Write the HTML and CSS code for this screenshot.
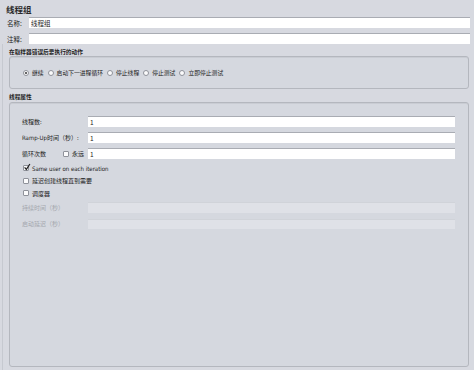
FILE: index.html
```html
<!DOCTYPE html>
<html>
<head>
  <title>线程组</title>
  <link rel="stylesheet" href="styles.css">
</head>
<body>

  <div class="title">线程组</div>

  <div class="field-row">
    <label class="field-label">名称:</label>
    <input class="text-input" type="text" value="线程组">
  </div>
  <div class="field-row comment-row">
    <label class="field-label">注释:</label>
    <input class="text-input" type="text" value="">
  </div>

  <div class="panel">
    <div class="group-title">在取样器错误后要执行的动作</div>
    <div class="group action-group">
      <label class="opt"><span class="radio checked"></span>继续</label>
      <label class="opt"><span class="radio"></span>启动下一进程循环</label>
      <label class="opt"><span class="radio"></span>停止线程</label>
      <label class="opt"><span class="radio"></span>停止测试</label>
      <label class="opt"><span class="radio"></span>立即停止测试</label>
    </div>

    <div class="group-title second-title">线程属性</div>
    <div class="group props">
      <div class="prop-row">
        <span class="prop-label">线程数:</span>
        <input class="prop-input" type="text" value="1">
      </div>
      <div class="prop-row">
        <span class="prop-label"><span class="latin">Ramp-Up</span>时间（秒）:</span>
        <input class="prop-input" type="text" value="1">
      </div>
      <div class="prop-row">
        <span class="prop-label loop-label">循环次数
          <span class="forever"><span class="check"></span>永远</span>
        </span>
        <input class="prop-input" type="text" value="1">
      </div>

      <div class="checks">
        <label class="check-row">
          <span class="check checked">
            <svg viewBox="0 0 10 10" width="8" height="8"><path d="M2 5.4 L4.2 8 L8.6 1.2" fill="none" stroke="#222" stroke-width="1.5"/></svg>
          </span>
          <span class="latin">Same user on each iteration</span>
        </label>
        <label class="check-row"><span class="check"></span>延迟创建线程直到需要</label>
        <label class="check-row"><span class="check"></span>调度器</label>
      </div>

      <div class="prop-row disabled first-disabled">
        <span class="prop-label">持续时间（秒）</span>
        <input class="prop-input" type="text" disabled>
      </div>
      <div class="prop-row disabled">
        <span class="prop-label">启动延迟（秒）</span>
        <input class="prop-input" type="text" disabled>
      </div>
    </div>
  </div>

</body>
</html>
```

FILE: styles.css
```css
body {
  margin: 0;
  width: 474px;
  height: 370px;
  overflow: hidden;
  background: #d7d9e0;
  font-family: "Noto Sans CJK SC", sans-serif;
  font-size: 6px;
  color: #222;
}
.latin {
  font-family: "DejaVu Sans Condensed", "DejaVu Sans", sans-serif;
  font-size: 6px;
}
.title {
  height: 17px;
  box-sizing: border-box;
  padding: 3px 0 0 6px;
  font-size: 8.5px;
  line-height: 12px;
  font-weight: bold;
  color: #2a2a2a;
}
.field-row {
  display: flex;
  align-items: center;
  height: 11px;
  padding-left: 7px;
  font-size: 6.5px;
}
.comment-row {
  margin-top: 5px;
}
.field-label {
  width: 22px;
}
.text-input, .prop-input {
  box-sizing: border-box;
  height: 11px;
  margin: 0;
  padding: 0 2px;
  border: none;
  border-top: 1px solid #a9acb3;
  background: #fff;
  font-family: "Noto Sans CJK SC", sans-serif;
  font-size: 6.5px;
  color: #222;
  outline: none;
}
.text-input {
  width: 441px;
}
.panel {
  margin-left: 2px;
  border-left: 1px solid #c6c9d0;
  height: 326px;
}
.group-title {
  padding: 3px 0 0 6px;
  line-height: 9px;
  font-weight: bold;
  font-size: 5.7px;
  color: #1e1e1e;
}
.second-title {
  line-height: 10px;
}
.group {
  box-sizing: border-box;
  width: 460px;
  margin-left: 6px;
  border: 1px solid #b4b7be;
  border-radius: 3px;
  box-shadow: inset 0 1px 0 #c9ccd3;
  background: #d5d8df;
}
.action-group {
  height: 33px;
  display: flex;
  align-items: center;
  gap: 4px;
  padding-left: 13px;
  font-size: 5.8px;
}
.opt {
  display: flex;
  align-items: center;
  gap: 3px;
}
.radio {
  display: inline-block;
  box-sizing: border-box;
  width: 6px;
  height: 6px;
  border: 1px solid #8f929a;
  border-radius: 50%;
  background: #fbfbfc;
  position: relative;
}
.radio.checked::after {
  content: "";
  position: absolute;
  left: 1px;
  top: 1px;
  width: 2px;
  height: 2px;
  border-radius: 50%;
  background: #333;
}
.props {
  height: 265px;
  padding: 12.7px 0 0 12px;
}
.prop-row {
  display: flex;
  align-items: center;
  height: 11px;
  margin-bottom: 5.3px;
}
.prop-label {
  width: 66px;
  display: flex;
  align-items: center;
  white-space: nowrap;
}
.prop-input {
  width: 367px;
}
.forever {
  display: flex;
  align-items: center;
  gap: 3px;
  margin-left: 17px;
}
.check {
  display: inline-block;
  box-sizing: border-box;
  width: 6px;
  height: 6px;
  border: 1px solid #8f929a;
  border-radius: 1px;
  background: #fbfbfc;
  position: relative;
  flex: none;
}
.check svg {
  position: absolute;
  left: -1px;
  top: -3px;
}
.checks {
  margin-top: -2.3px;
  margin-left: 1px;
}
.check-row {
  display: flex;
  align-items: center;
  gap: 3px;
  height: 12.3px;
}
.disabled {
  color: #a4a7ae;
}
.first-disabled {
  margin-top: 3px;
}
.disabled .prop-input {
  height: 10.5px;
  background: #dfe1e7;
  border-top-color: #d0d3d9;
}
```
